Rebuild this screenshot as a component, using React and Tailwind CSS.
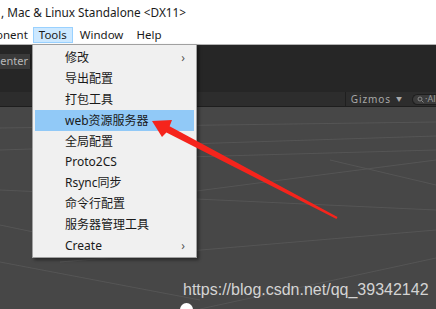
import React from "react";

const menuItems = [
  { label: "修改", sub: true },
  { label: "导出配置" },
  { label: "打包工具" },
  { label: "web资源服务器", active: true },
  { label: "全局配置" },
  { label: "Proto2CS" },
  { label: "Rsync同步" },
  { label: "命令行配置" },
  { label: "服务器管理工具" },
  { label: "Create", sub: true },
];

const gridLines = [
  [0, 128, 436, 122],
  [0, 150, 436, 136],
  [150, 158, 436, 150],
  [0, 190, 436, 210],
  [150, 197, 436, 160],
  [0, 262, 200, 300],
  [60, 262, 436, 230],
  [0, 225, 120, 250],
  [200, 309, 436, 258],
  [330, 160, 436, 185],
];

const ToolsMenu = () => (
  <div className="absolute left-[32px] top-[44px] w-[165px] h-[214px] bg-[#f0f0f0] border border-[#a0a0a0] shadow-[2px_2px_3px_rgba(0,0,0,0.45)] pt-[3px] px-[2px]">
    {menuItems.map((item) => (
      <div
        key={item.label}
        className={`h-[20.8px] flex items-center justify-between pl-[30px] pr-[9px] text-[12px] text-[#1a1a1a] ${
          item.active ? "bg-[#91c9f7]" : ""
        }`}
      >
        <span>{item.label}</span>
        {item.sub && <span className="text-[#555] text-[12px]">›</span>}
      </div>
    ))}
  </div>
);

const RedArrow = () => (
  <svg className="absolute left-0 top-0" width="436" height="309">
    <polygon
      points="152,121 172,120 169.6,126.3 337.5,217.1 336.5,218.9 166.4,132.5 162,137"
      fill="#f5241c"
    />
  </svg>
);

export default function App() {
  return (
    <div className="relative w-[436px] h-[309px] overflow-hidden bg-white font-['Noto_Sans','Noto_Sans_CJK_SC',sans-serif]">
      <div className="h-[25px] flex items-center text-[11.8px] text-[#1a1a1a] pl-[1px]">
        , Mac &amp; Linux Standalone &lt;DX11&gt;
      </div>
      <div className="h-[19px] flex items-center text-[11.5px] text-[#1a1a1a]">
        <span className="ml-[-4px]">onent</span>
        <span className="ml-[5px] h-[16px] flex items-center px-[5px] border border-[#99d1ff] bg-[#cce8ff]">
          Tools
        </span>
        <span className="ml-[7px]">Window</span>
        <span className="ml-[13px]">Help</span>
      </div>
      <div className="h-[265px] flex flex-col border-t border-[#b4b4b4]">
        <div className="h-[47px] bg-[#262626] pt-[9px]">
          <div className="w-[31px] h-[15px] bg-[#3a3a3a] border-r border-[#1c1c1c] flex items-center justify-end pr-[2px] text-[11px] text-[#b8b8b8]">
            enter
          </div>
        </div>
        <div className="h-[15px] bg-[#2d2d2d] border-b border-[#1e1e1e] flex items-center justify-end text-[10px] text-[#a8a8a8]">
          <div className="h-full border-l border-[#1f1f1f] flex items-center pl-[5px] pr-[10px] gap-[5px]">
            <span className="tracking-[0.9px]">Gizmos</span>
            <span className="text-[6px]">▼</span>
          </div>
          <div className="w-[24px] h-[11px] rounded-l-full bg-[#3b3b3b] border border-[#1e1e1e] border-r-0 flex items-center pl-[4px] gap-[1px] text-[#888]">
            <svg width="7" height="7" viewBox="0 0 7 7">
              <circle cx="3" cy="3" r="2" stroke="#888" fill="none" strokeWidth="1" />
              <line x1="4.5" y1="4.5" x2="6.5" y2="6.5" stroke="#888" strokeWidth="1" />
            </svg>
            <span className="text-[9px] text-[#999]">·Al</span>
          </div>
        </div>
        <div className="relative flex-1 bg-[#474747]">
          <svg className="absolute left-0 top-[-107px]" width="436" height="309">
            {gridLines.map(([x1, y1, x2, y2], i) => (
              <line key={i} x1={x1} y1={y1} x2={x2} y2={y2} stroke="#555" strokeWidth="1" />
            ))}
          </svg>
        </div>
      </div>

      <ToolsMenu />
      <RedArrow />

      <div className="absolute left-[183px] top-[280px] text-[16px] leading-[20px] text-[#d4d4d4] font-['Liberation_Sans',sans-serif]">
        https://blog.csdn.net/qq_39342142
      </div>
      <div className="absolute left-[180px] top-[303px] w-[13px] h-[13px] rounded-full bg-white" />
    </div>
  );
}
